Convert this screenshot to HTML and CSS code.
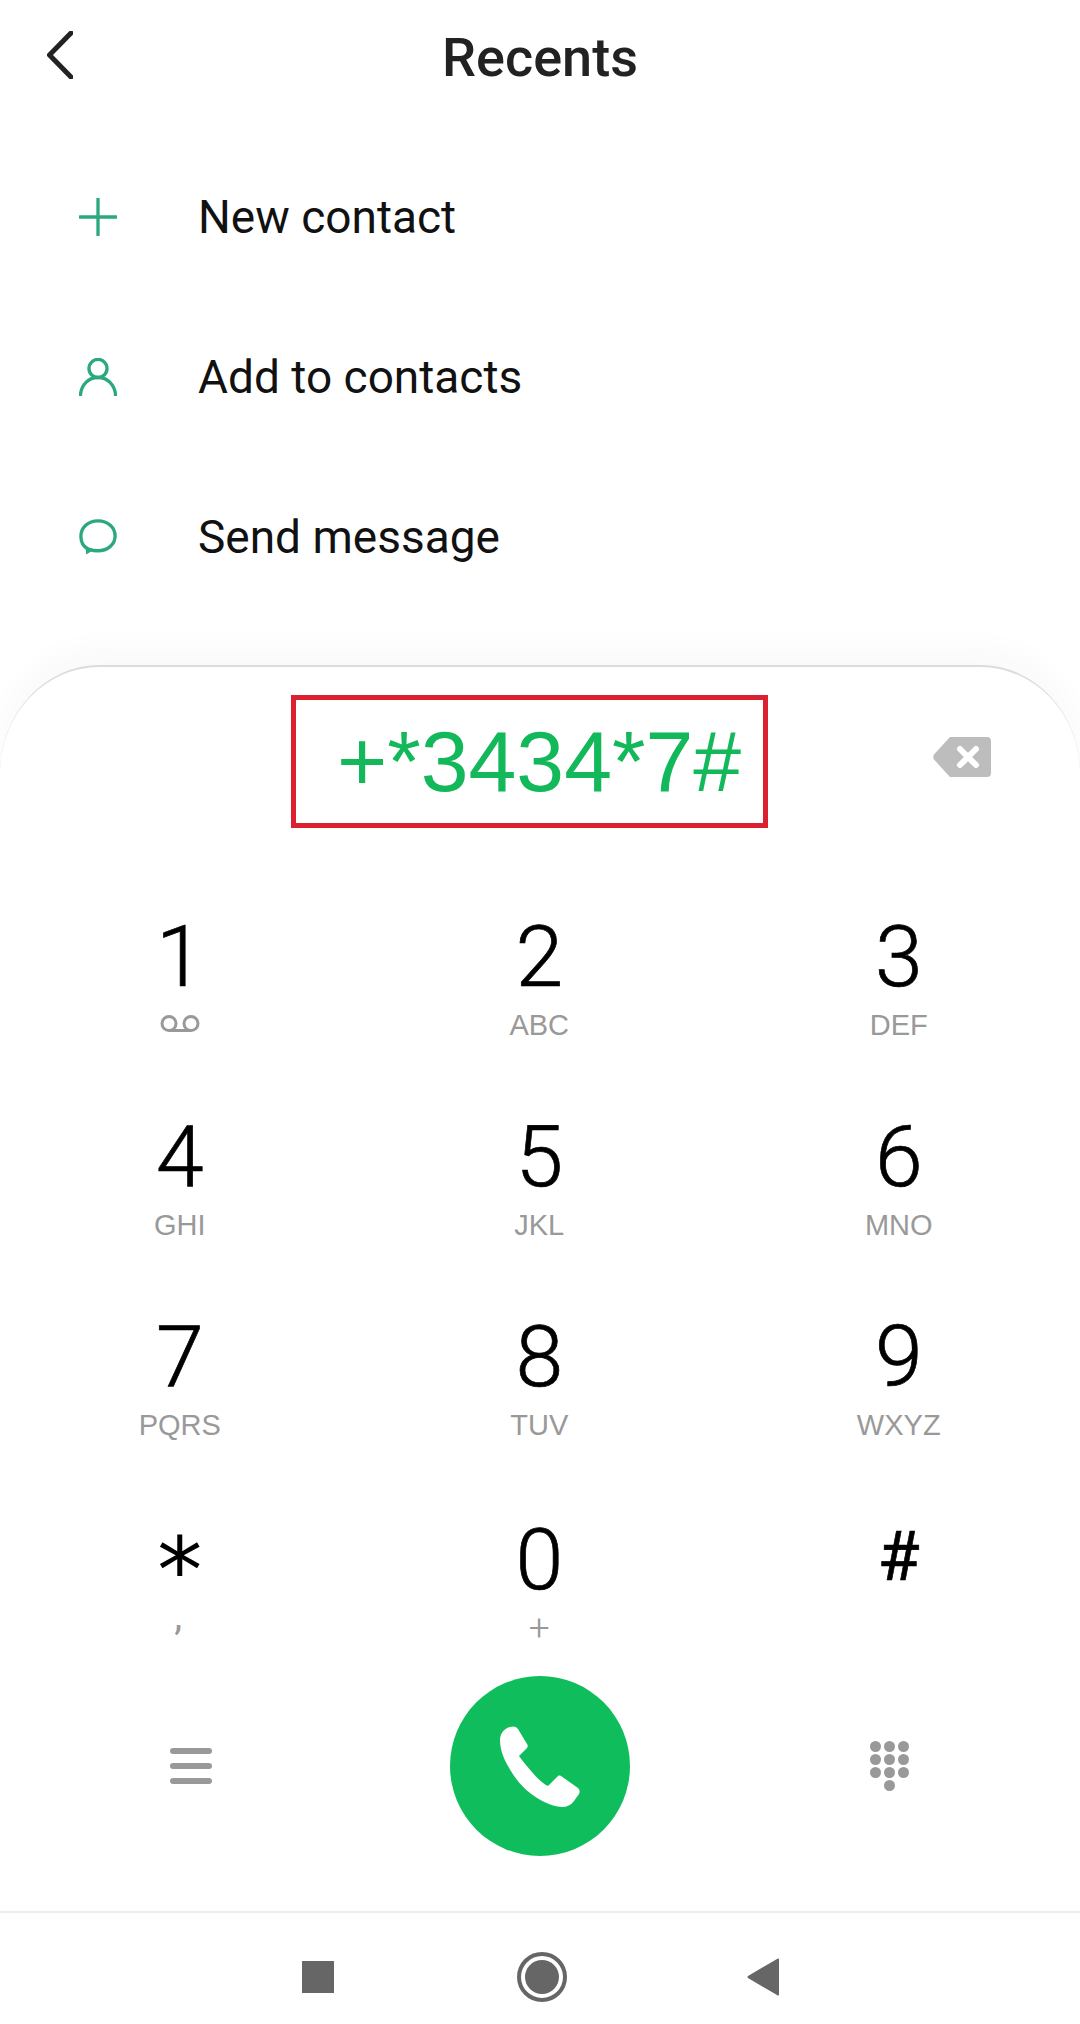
FILE: index.html
```html
<!DOCTYPE html>
<html lang="en">
<head>
<meta charset="utf-8">
<title>Recents</title>
<link rel="stylesheet" href="styles.css">
</head>
<body>
<div class="app">
  <header class="top">
    <svg class="back" viewBox="0 0 26 48"><path d="M24 2 L2.500 24 L24 46"/></svg>
    <h1 class="title">Recents</h1>
  </header>
  <ul class="actions">
    <li class="action">
      <svg class="ic" viewBox="0 0 40 40"><path d="M1 20H39M20 1V39"/></svg>
      <span>New contact</span>
    </li>
    <li class="action">
      <svg class="ic" viewBox="0 0 40 40"><circle cx="20" cy="11" r="9.500"/><path d="M1.500 39C2.500 28 10 20.500 20 20.500S37.500 28 38.500 39"/></svg>
      <span>Add to contacts</span>
    </li>
    <li class="action">
      <svg class="ic" viewBox="0 0 40 40"><path d="M9 32.500C4 29.500 2 25 2 19.500C2 10 9.500 3 20 3S38 10 38 19C38 28 30 34.500 20 34.500C16.500 34.500 13.500 34 11 33"/><path class="fill" d="M7 29L15 34L7.500 38.500Z"/></svg>
      <span>Send message</span>
    </li>
  </ul>
  <section class="panel">
    <div class="number-row">
      <div class="number-box">+*3434*7#</div>
      <svg class="del" viewBox="0 0 58 40"><path class="del-bg" d="M17 0H54C56.500 0 58 1.500 58 4V36C58 38.500 56.500 40 54 40H17L1 22.500C0 21 0 19 1 17.500Z"/><path class="del-x" d="M27 12L43 28M43 12L27 28"/></svg>
    </div>
    <div class="keypad">
      <div class="key"><div class="digit">1</div><svg class="vm" viewBox="0 0 40 18"><circle cx="9" cy="8.500" r="7"/><circle cx="31" cy="8.500" r="7"/><path d="M9 15.500H31"/></svg></div>
      <div class="key"><div class="digit">2</div><div class="sub">ABC</div></div>
      <div class="key"><div class="digit">3</div><div class="sub">DEF</div></div>
      <div class="key"><div class="digit">4</div><div class="sub">GHI</div></div>
      <div class="key"><div class="digit">5</div><div class="sub">JKL</div></div>
      <div class="key"><div class="digit">6</div><div class="sub">MNO</div></div>
      <div class="key"><div class="digit">7</div><div class="sub">PQRS</div></div>
      <div class="key"><div class="digit">8</div><div class="sub">TUV</div></div>
      <div class="key"><div class="digit">9</div><div class="sub">WXYZ</div></div>
      <div class="key low"><div class="digit star">*</div><div class="sub comma">,</div></div>
      <div class="key low"><div class="digit">0</div><div class="sub plus">+</div></div>
      <div class="key low"><div class="digit hash">#</div></div>
    </div>
    <div class="call-row">
      <div class="menu"><i></i><i></i><i></i></div>
      <div class="call">
        <svg viewBox="0 0 80 81"><path d="M10 1C5 2 0 7 0 14C0 24 4 33 8 40C14 51 21 60 30 67C39 74 50 80 62 81C67 81 71 79 74 75L79 68C80 66 80 64 78 62L61 50C59 49 58 50 57 51L48 60C43 58 37 52 32 46C26 39 21 33 19 30L27 22C28 21 28 19 27 18L18 3C16 0 13 0 10 1Z"/></svg>
      </div>
      <div class="dots">
        <i></i><i></i><i></i><i></i><i></i><i></i><i></i><i></i><i></i><i class="last"></i>
      </div>
    </div>
  </section>
  <nav class="nav">
    <span class="nav-square"></span>
    <svg class="nav-home" viewBox="0 0 50 50"><circle class="ring" cx="25" cy="25" r="23"/><circle class="core" cx="25" cy="25" r="17"/></svg>
    <svg class="nav-back" viewBox="0 0 32 38"><path d="M32 1.500V36.500C32 37.500 31 38 30 37L1 20C0.300 19.500 0.300 18.500 1 18L30 1C31 0 32 0.500 32 1.500Z"/></svg>
  </nav>
</div>
</body>
</html>
```
FILE: styles.css
```css
* { box-sizing: border-box; }
html, body { margin: 0; padding: 0; background: #fff; }
.app {
  width: 1080px;
  height: 2024px;
  display: flex;
  flex-direction: column;
  overflow: hidden;
  font-family: Roboto, "Liberation Sans", sans-serif;
  background: #fff;
}
.top {
  position: relative;
  height: 114px;
  display: flex;
  align-items: center;
  justify-content: center;
}
.back {
  position: absolute;
  left: 47px;
  top: 31px;
  width: 26px;
  height: 48px;
  fill: none;
  stroke: #222;
  stroke-width: 5;
  stroke-linecap: round;
  stroke-linejoin: round;
}
.title {
  margin: 0;
  font-size: 54px;
  font-weight: 500;
  color: #222;
}
.actions {
  list-style: none;
  margin: 23px 0 0;
  padding: 0;
}
.action {
  height: 160px;
  display: flex;
  align-items: center;
  padding-left: 79px;
  gap: 81px;
  font-size: 46px;
  color: #111;
}
.ic {
  width: 38px;
  height: 38px;
  fill: none;
  stroke: #2ba87f;
  stroke-width: 3.500;
  stroke-linecap: round;
}
.ic .fill { fill: #2ba87f; stroke: none; }
.panel {
  margin-top: 48px;
  height: 1246px;
  background: #fff;
  border-top: 2px solid #dcdcdc;
  border-radius: 100px 100px 0 0 / 108px 108px 0 0;
  box-shadow: 0 -18px 30px rgba(0, 0, 0, 0.025);
  display: flex;
  flex-direction: column;
}
.number-row {
  display: flex;
  align-items: center;
  margin-top: 28px;
  padding-left: 291px;
}
.number-box {
  width: 477px;
  height: 133px;
  border: 5px solid #dd2030;
  padding-left: 41px;
  display: flex;
  align-items: center;
  font-family: "Liberation Sans", Arial, sans-serif;
  font-size: 86px;
  color: #12b85a;
  white-space: nowrap;
}
.del {
  width: 58px;
  height: 40px;
  margin-left: 165px;
  margin-top: -9px;
}
.del-bg { fill: #bdbdbd; }
.del-x { fill: none; stroke: #fff; stroke-width: 6; stroke-linecap: round; }
.keypad {
  margin-top: 73px;
  display: grid;
  grid-template-columns: repeat(3, 359.500px);
  grid-auto-rows: 150px;
  row-gap: 50px;
}
.key {
  display: flex;
  flex-direction: column;
  align-items: center;
}
.key.low { padding-top: 3px; }
.digit {
  margin-top: 11px;
  height: 90px;
  line-height: 90px;
  font-size: 86px;
  font-weight: 300;
  color: #000;
  -webkit-text-stroke: 0.7px #000;
}
.star {
  margin-top: 33px;
  height: 68px;
  line-height: 68px;
  font-family: "DejaVu Sans", sans-serif;
  font-size: 90px;
  font-weight: 400;
  -webkit-text-stroke: 0;
}
.hash { margin-top: 8px; font-size: 68px; font-weight: 400; }
.sub {
  margin-top: 6px;
  height: 34px;
  line-height: 34px;
  font-family: "Liberation Sans", Arial, sans-serif;
  font-size: 29px;
  color: #999;
}
.comma { font-family: Roboto, sans-serif; font-size: 40px; line-height: 10px; margin-left: -3px; }
.plus { font-family: Roboto, sans-serif; font-weight: 300; font-size: 37px; }
.vm {
  margin-top: 13px;
  width: 40px;
  height: 18px;
  fill: none;
  stroke: #999;
  stroke-width: 3;
}
.call-row {
  margin-top: 25px;
  display: grid;
  grid-template-columns: repeat(3, 360px);
  align-items: center;
  justify-items: center;
}
.menu {
  display: flex;
  flex-direction: column;
  gap: 9px;
  width: 42px;
  margin-left: 22px;
}
.menu i {
  display: block;
  height: 6px;
  background: #999;
  border-radius: 3px;
}
.call {
  width: 180px;
  height: 180px;
  border-radius: 50%;
  background: #0fbd5c;
  display: flex;
  align-items: center;
  justify-content: center;
}
.call svg {
  width: 80px;
  height: 81px;
  fill: #fff;
}
.dots {
  display: grid;
  grid-template-columns: repeat(3, 11px);
  grid-auto-rows: 11px;
  gap: 2px 3px;
  margin-right: 22px;
}
.dots i {
  display: block;
  border-radius: 50%;
  background: #999;
}
.dots .last { grid-column: 2; }
.nav {
  height: 113px;
  border-top: 2px solid #ececec;
  display: flex;
  justify-content: center;
  align-items: center;
  gap: 180px;
  padding-top: 16px;
}
.nav-square {
  width: 32px;
  height: 32px;
  margin-right: 3px;
  background: #666;
}
.nav-home {
  width: 50px;
  height: 50px;
}
.ring { fill: none; stroke: #666; stroke-width: 4; }
.core { fill: #666; }
.nav-back {
  width: 32px;
  height: 38px;
  fill: #666;
}
```
